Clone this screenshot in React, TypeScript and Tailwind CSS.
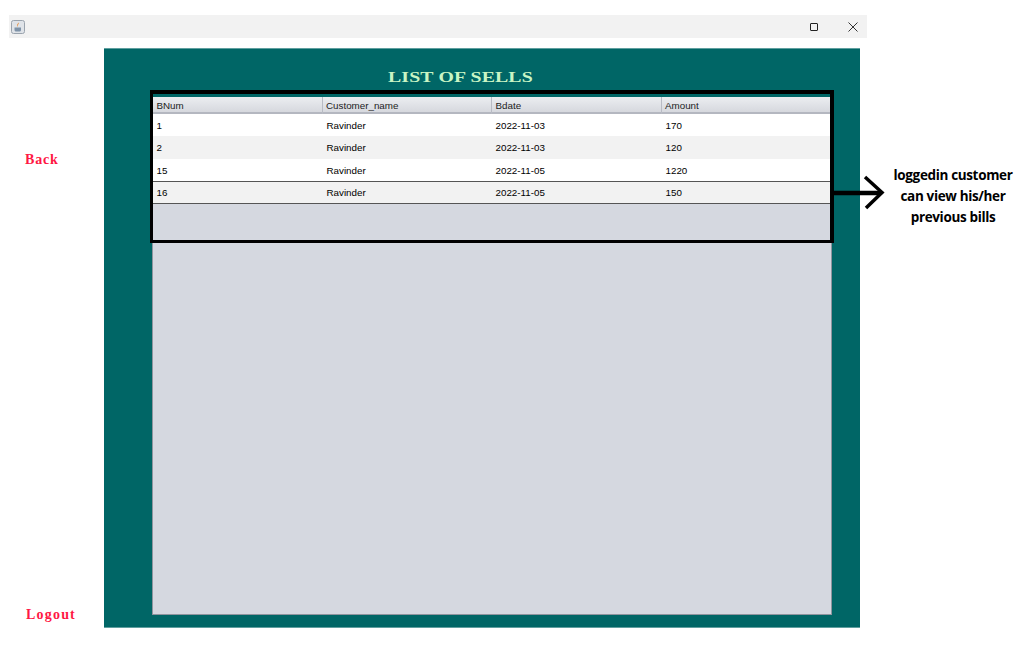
import React from "react";

const rows = [
  { n: "1", c: "Ravinder", d: "2022-11-03", a: "170", cls: "h-[22px] bg-white" },
  { n: "2", c: "Ravinder", d: "2022-11-03", a: "120", cls: "h-[23px] bg-[#f2f2f2]" },
  { n: "15", c: "Ravinder", d: "2022-11-05", a: "1220", cls: "h-[22px] bg-white" },
  { n: "16", c: "Ravinder", d: "2022-11-05", a: "150", cls: "h-[23px] bg-[#f2f2f2] border-y border-[#555]" },
];
const heads = ["BNum", "Customer_name", "Bdate", "Amount"];
const cols = "grid grid-cols-[169.5px_169.5px_169.5px_1fr]";

export default function App() {
  return (
    <div className="relative w-[1019px] h-[653px] bg-white overflow-hidden font-['Liberation_Sans',sans-serif]">
      <div className="pt-[15px] pl-[9px]">
        <div className="w-[858px] h-[23px] bg-[#f2f2f2] flex items-center justify-between pl-[2px] pr-[7px]">
          <svg width="14" height="14" viewBox="0 0 14 14">
            <rect x="0.5" y="0.5" width="13" height="13" rx="2" fill="#dfe3e8" stroke="#9aa3ad" />
            <path d="M7.5 2.5c1 1.500-1.500 2.300-.5 4.500-1.800-1.500-.5-3 .5-4.500z" fill="#e8862e" />
            <path d="M3.500 7.500h6.500v2.500c0 1-1 1.500-1.500 1.500h-3.500c-.8 0-1.500-.6-1.500-1.500z" fill="#7f93a8" />
          </svg>
          <div className="flex items-center gap-[30px]">
            <div className="w-[8px] h-[8px] border border-[#222] rounded-[1px]" />
            <svg width="10" height="10" viewBox="0 0 10 10" className="mr-[2px]">
              <path d="M0.500 0.500L9.500 9.500M9.500 0.500L0.500 9.500" stroke="#333" strokeWidth="1" fill="none" />
            </svg>
          </div>
        </div>
      </div>
      <div className="flex mt-[10px] h-[580px]">
        <div className="w-[104px] flex flex-col justify-between pl-[25px] pt-[103px] pb-[4px] font-['Liberation_Serif',serif] font-bold text-[14px] leading-[18px] text-[#ff1744]">
          <span className="tracking-[0.8px]">Back</span>
          <span className="tracking-[1.2px] pl-[1px]">Logout</span>
        </div>
        <div className="w-[756px] h-[580px] bg-[#006666] border-t border-b border-[#5f9f9f] flex flex-col pl-[48px] pr-[28px] pb-[12px]">
          <div className="h-[48px] pt-[18px] pl-[236px] font-['Liberation_Serif',serif] font-bold text-[15px] leading-[20px] tracking-[0.1px] text-[#c9f5c4] whitespace-nowrap">
            <span className="inline-block origin-left scale-x-[1.32]">LIST OF SELLS</span>
          </div>
          <div className="flex-1 bg-[#d5d8e0] border border-[#8f949e] border-t-0 flex flex-col text-black text-[9.800px]">
            <div className={`${cols} h-[17px] bg-gradient-to-b from-[#eceef1] to-[#d6d8de] border-b-2 border-[#b4b7c0]`}>
              {heads.map((h) => (
                <div key={h} className="pl-[3.500px] leading-[17px] border-r border-[#b8bbc4] last:border-r-0 text-[#222]">
                  {h}
                </div>
              ))}
            </div>
            {rows.map((r) => (
              <div key={r.n} className={`${cols} mr-[1px] items-center ${r.cls}`}>
                <div className="pl-[3.500px] pt-[2px]">{r.n}</div>
                <div className="pl-[4px] pt-[2px]">{r.c}</div>
                <div className="pl-[3.500px] pt-[2px]">{r.d}</div>
                <div className="pl-[4px] pt-[2px]">{r.a}</div>
              </div>
            ))}
          </div>
        </div>
      </div>

      {/* annotation drawn over the screenshot */}
      <div className="absolute left-[150px] top-[90px] w-[684px] h-[153px] border-[3px] border-t-4 border-r-4 border-black pointer-events-none" />
      <svg className="absolute left-[834px] top-[172px]" width="54" height="40" viewBox="0 0 54 40">
        <path d="M0 21H47" stroke="#000" strokeWidth="4.500" fill="none" />
        <path d="M31 5L48 20.500L32 36" stroke="#000" strokeWidth="3.500" fill="none" />
      </svg>
      <div className="absolute left-[880px] top-[165px] w-[146px] text-center font-['Open_Sans',sans-serif] font-bold text-[13.500px] leading-[21px] tracking-[-0.35px] text-black">
        loggedin customer
        <br />
        can view his/her
        <br />
        previous bills
      </div>
    </div>
  );
}
